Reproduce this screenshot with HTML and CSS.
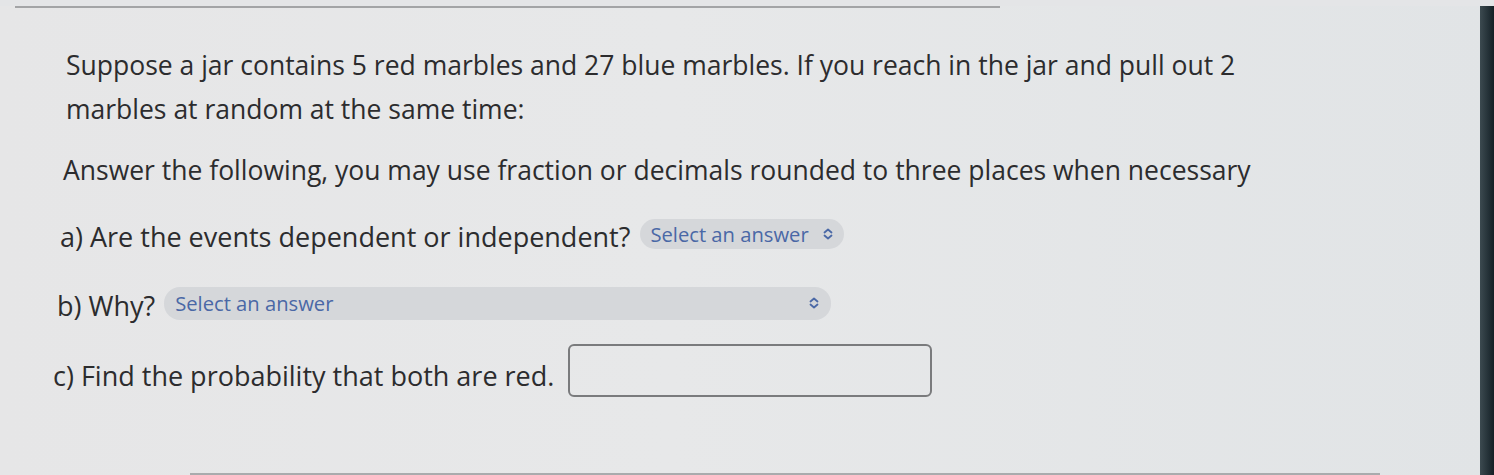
FILE: index.html
```html
<!DOCTYPE html>
<html>
<head>
<meta charset="utf-8">
<link rel="stylesheet" href="styles.css">
</head>
<body>
<div class="screen">
  <div class="top-rule"></div>
  <div class="content">
    <p class="intro">Suppose a jar contains 5 red marbles and 27 blue marbles. If you reach in the jar and pull out 2 marbles at random at the same time:</p>
    <p class="instr">Answer the following, you may use fraction or decimals rounded to three places when necessary</p>
    <div class="row row-a">
      <span class="label">a) Are the events dependent or independent?</span>
      <span class="select select-a">Select an answer
        <svg class="chev" viewBox="0 0 10 12" width="10" height="12"><path d="M1.5 4.5 L5 1.5 L8.5 4.5 M1.5 7.5 L5 10.5 L8.5 7.5" fill="none" stroke="#4a68a6" stroke-width="1.8" stroke-linecap="round" stroke-linejoin="round"/></svg>
      </span>
    </div>
    <div class="row row-b">
      <span class="label">b) Why?</span>
      <span class="select select-b"><span>Select an answer</span>
        <svg class="chev" viewBox="0 0 10 12" width="10" height="12"><path d="M1.5 4.5 L5 1.5 L8.5 4.5 M1.5 7.5 L5 10.5 L8.5 7.5" fill="none" stroke="#4a68a6" stroke-width="1.8" stroke-linecap="round" stroke-linejoin="round"/></svg>
      </span>
    </div>
    <div class="row row-c">
      <span class="label">c) Find the probability that both are red.</span>
      <span class="input"></span>
    </div>
  </div>
  <div class="bottom-rule"></div>
  <div class="edge"></div>
</div>
</body>
</html>
```

FILE: styles.css
```css
html, body {
  margin: 0;
  padding: 0;
}
body {
  width: 1494px;
  height: 475px;
  overflow: hidden;
  background: #e4e5e7;
  font-family: "Open Sans", "Noto Sans", sans-serif;
  color: #2c2c2e;
}
.screen {
  position: relative;
  width: 1494px;
  height: 475px;
  background: linear-gradient(90deg, #e6e6e7 0%, #e7e8e9 45%, #e1e4e6 100%);
}
.top-rule {
  height: 2px;
  width: 985px;
  margin-left: 15px;
  margin-top: 6px;
  background: #a3a4a6;
}
.content {
  padding: 35px 0 0 61px;
}
.intro {
  margin: 0 0 0 5px;
  font-size: 26.5px;
  line-height: 44px;
  width: 1200px;
}
.instr {
  margin: 19px 0 0 2px;
  font-size: 26.5px;
  line-height: 40px;
  white-space: nowrap;
}
.row {
  display: flex;
  align-items: center;
  font-size: 27px;
}
.row-a {
  margin-top: 29px;
  height: 34px;
  margin-left: -1px;
}
.row-b {
  margin-top: 35px;
  height: 34px;
  margin-left: -4px;
}
.row-c {
  margin-top: 26px;
  height: 54px;
  margin-left: -8px;
}
.label {
  white-space: nowrap;
}
.select {
  display: flex;
  align-items: center;
  justify-content: space-between;
  box-sizing: border-box;
  background: #d5d7da;
  color: #4a68a6;
  font-size: 20.2px;
  border-radius: 15px;
  white-space: nowrap;
}
.select-a {
  margin: 0 0 4px 10px;
  width: 204px;
  height: 30px;
  padding: 0 11px 0 10px;
}
.select-b {
  margin: 0 0 4px 9px;
  width: 667px;
  height: 33px;
  padding: 0 12px 0 11px;
  border-radius: 16px;
}
.chev {
  display: block;
}
.input {
  margin: 0 0 10px 14px;
  width: 364px;
  height: 53px;
  box-sizing: border-box;
  border: 2px solid #7a7b7d;
  border-radius: 6px;
}
.bottom-rule {
  position: absolute;
  left: 190px;
  top: 467px;
  width: 1190px;
  height: 2px;
  background: #a9abad;
}
.edge {
  position: absolute;
  right: 0;
  top: 0;
  width: 14px;
  height: 475px;
  background: linear-gradient(90deg, #3c4a50, #142026);
}
```
